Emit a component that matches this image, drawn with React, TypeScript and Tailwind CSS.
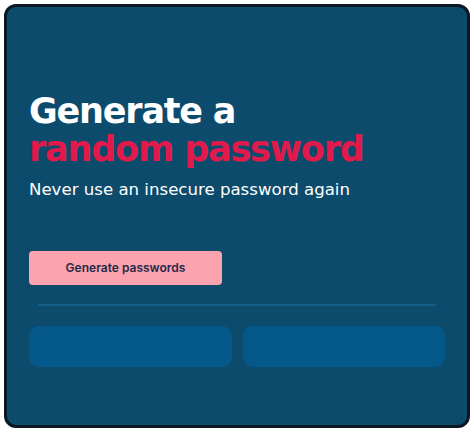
import React from "react";

export default function App() {
  return (
    <div className="w-[474px] h-[432px] bg-white p-[4px]">
      <div className="w-[466px] h-[424px] rounded-[12px] border-[3px] border-[#0b1822] bg-[#0d4b6d] px-[22px] pt-[85px]">
        <h1
          className="text-[35px] leading-[38px] font-bold tracking-[-1.2px] text-white"
          style={{ fontFamily: '"DejaVu Sans", Verdana, sans-serif' }}
        >
          Generate a
          <br />
          <span className="text-[#e2194b]">random password</span>
        </h1>
        <p
          className="mt-[10px] text-[16.6px] leading-[24px] text-white"
          style={{ fontFamily: '"DejaVu Sans", Verdana, sans-serif' }}
        >
          Never use an insecure password again
        </p>
        <button
          className="mt-[49px] flex h-[34px] w-[193px] items-center justify-center rounded-[4px] bg-[#fca3ae] text-[12px] font-semibold text-[#1f2a48]"
          style={{ fontFamily: 'Inter, "Noto Sans", sans-serif' }}
        >
          Generate passwords
        </button>
        <div className="mx-[9px] mt-[19px] h-[2px] bg-[#145e87]" />
        <div className="mt-[20px] grid grid-cols-2 gap-[11px]">
          <div className="h-[41px] rounded-[10px] bg-[#05598a]" />
          <div className="h-[41px] rounded-[10px] bg-[#05598a]" />
        </div>
      </div>
    </div>
  );
}
